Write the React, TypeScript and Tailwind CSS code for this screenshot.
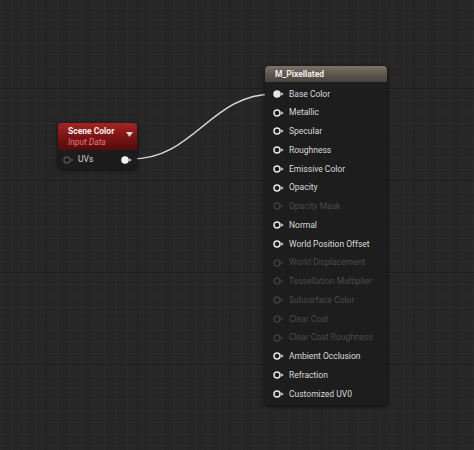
import React from "react";

// Material graph: a result node with its inputs, one Scene Color node wired in.
const inputs: { label: string; enabled: boolean; linked?: boolean }[] = [
  { label: "Base Color", enabled: true, linked: true },
  { label: "Metallic", enabled: true },
  { label: "Specular", enabled: true },
  { label: "Roughness", enabled: true },
  { label: "Emissive Color", enabled: true },
  { label: "Opacity", enabled: true },
  { label: "Opacity Mask", enabled: false },
  { label: "Normal", enabled: true },
  { label: "World Position Offset", enabled: true },
  { label: "World Displacement", enabled: false },
  { label: "Tessellation Multiplier", enabled: false },
  { label: "Subsurface Color", enabled: false },
  { label: "Clear Coat", enabled: false },
  { label: "Clear Coat Roughness", enabled: false },
  { label: "Ambient Occlusion", enabled: true },
  { label: "Refraction", enabled: true },
  { label: "Customized UV0", enabled: true },
];

function Pin({ color, filled }: { color: string; filled?: boolean }) {
  return (
    <svg width="12" height="8" viewBox="0 0 12 8" className="shrink-0">
      <circle
        cx="4"
        cy="4"
        r="3"
        fill={filled ? color : "none"}
        stroke={color}
        strokeWidth="1.5"
      />
      <polygon points="8.3,2.3 10.6,4 8.3,5.7" fill={color} />
    </svg>
  );
}

function GridBackground() {
  return (
    <svg className="absolute inset-0" width="474" height="450">
      <defs>
        <pattern id="minor" width="11.5" height="11.5" patternUnits="userSpaceOnUse" x="0.5" y="0.5">
          <path d="M 0 0 L 0 11.5 M 0 0 L 11.5 0" stroke="#303030" strokeWidth="1" fill="none" />
        </pattern>
        <pattern id="major" width="92" height="92" patternUnits="userSpaceOnUse" x="46" y="88">
          <rect width="92" height="92" fill="url(#minor)" />
          <path d="M 0 0 L 0 92 M 0 0 L 92 0" stroke="#1a1a1a" strokeWidth="1.4" fill="none" />
        </pattern>
      </defs>
      <rect width="474" height="450" fill="#262626" />
      <rect width="474" height="450" fill="url(#major)" />
    </svg>
  );
}

function SceneColorNode() {
  return (
    <div className="absolute left-[58px] top-[123px] w-[79px] rounded-[4px] bg-[#1c1c1c] shadow-[0_1px_4px_rgba(0,0,0,0.7)] overflow-hidden">
      <div className="relative h-[27px] pl-[10px] pt-[3px] bg-[linear-gradient(180deg,#a62424_0%,#801616_45%,#520b0b_100%)]">
        <div className="text-[8.5px] font-bold leading-[11px] text-[#f2f2f2]">Scene Color</div>
        <div className="text-[8.5px] italic leading-[10px] text-[#e27a80]">Input Data</div>
        <svg width="7" height="5" viewBox="0 0 7 5" className="absolute left-[68px] top-[9px]">
          <polygon points="0,0 7,0 3.5,5" fill="#d6d6d6" />
        </svg>
      </div>
      <div className="flex items-center h-[19px] pl-[5px] pr-[4px]">
        <Pin color="#4e4e4e" />
        <span className="ml-[3px] text-[8.5px] text-[#d4d4d4]">UVs</span>
        <div className="ml-auto">
          <Pin color="#f2f2f2" filled />
        </div>
      </div>
    </div>
  );
}

function MaterialNode() {
  return (
    <div className="absolute left-[265px] top-[66px] w-[122px] rounded-[4px] bg-[#1d1d1d] shadow-[0_1px_5px_rgba(0,0,0,0.75)] overflow-hidden">
      <div className="h-[16px] pl-[10px] flex items-center bg-[linear-gradient(180deg,#7c7366_0%,#5e574d_50%,#48433d_100%)]">
        <span className="text-[8.5px] font-bold text-[#ececec]">M_Pixellated</span>
      </div>
      <div className="pt-[2.5px] pb-[1.5px]">
        {inputs.map((input) => (
          <div key={input.label} className="flex items-center h-[18.75px] pl-[8px]">
            <Pin
              color={input.enabled ? "#e6e6e6" : "#3e3e3e"}
              filled={input.linked}
            />
            <span
              className={
                "ml-[4px] text-[8.5px] whitespace-nowrap " +
                (input.enabled ? "text-[#dadada]" : "text-[#4a4a4a]")
              }
            >
              {input.label}
            </span>
          </div>
        ))}
      </div>
    </div>
  );
}

export default function App() {
  return (
    <div className="relative w-[474px] h-[450px] overflow-hidden bg-[#262626] font-['Roboto',sans-serif]">
      <GridBackground />
      <svg className="absolute inset-0" width="474" height="450">
        <path
          d="M 131 159 C 195 159, 210 94, 274 94"
          stroke="#d8d8d8"
          strokeWidth="1.6"
          fill="none"
        />
      </svg>
      <SceneColorNode />
      <MaterialNode />
    </div>
  );
}
